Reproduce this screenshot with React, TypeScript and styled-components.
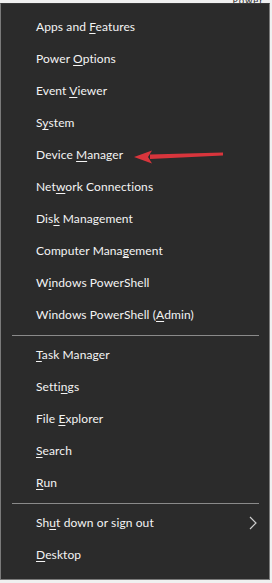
import React from "react";
import styled, { createGlobalStyle } from "styled-components";

const Global = createGlobalStyle`
  html, body { margin: 0; padding: 0; background: #ffffff; }
  body { width: 272px; height: 583px; overflow: hidden; font-family: "Lato", "Noto Sans", sans-serif; }
`;

const Page = styled.div`
  position: relative;
  width: 272px;
  height: 583px;
  background: #f0f0f0;
  padding: 3px 2px 3px 0;
  box-sizing: border-box;
`;

const Menu = styled.div`
  position: relative;
  width: 270px;
  height: 577px;
  box-sizing: border-box;
  background: #2b2b2b;
  border: 1px solid #7a7a7a;
  border-top-color: #3a3a3a;
  padding: 7px 0 0 0;
  display: flex;
  flex-direction: column;
`;

const Item = styled.div`
  height: 32px;
  display: flex;
  align-items: center;
  justify-content: space-between;
  padding: 0 12px 0 35px;
  color: #f4f4f4;
  font-family: "Lato", "Noto Sans", sans-serif;
  font-size: 12px;
  letter-spacing: 0.1px;
  line-height: 1;
`;

const Key = styled.span`
  text-decoration: underline;
  text-underline-offset: 2px;
  text-decoration-thickness: 1px;
`;

const Separator = styled.div`
  height: 8px;
  display: flex;
  align-items: center;
  padding: 0 10px 0 11px;
  &::after {
    content: "";
    flex: 1;
    height: 1px;
    background: #8a8a8a;
  }
`;

const Arrow = styled.svg`
  position: absolute;
  left: 130px;
  top: 146px;
`;

const Chevron = styled.svg`
  display: block;
`;

const TopText = styled.div`
  position: absolute;
  top: -4px;
  right: 8px;
  font-size: 9px;
  line-height: 9px;
  color: #222;
  font-family: "Noto Sans", sans-serif;
  letter-spacing: 1px;
`;

type Entry = { pre: string; key: string; post: string; sub?: boolean } | "sep";

const entries: Entry[] = [
  { pre: "Apps and ", key: "F", post: "eatures" },
  { pre: "Power ", key: "O", post: "ptions" },
  { pre: "Event ", key: "V", post: "iewer" },
  { pre: "S", key: "y", post: "stem" },
  { pre: "Device ", key: "M", post: "anager" },
  { pre: "Net", key: "w", post: "ork Connections" },
  { pre: "Dis", key: "k", post: " Management" },
  { pre: "Computer Mana", key: "g", post: "ement" },
  { pre: "W", key: "i", post: "ndows PowerShell" },
  { pre: "Windows PowerShell (", key: "A", post: "dmin)" },
  "sep",
  { pre: "", key: "T", post: "ask Manager" },
  { pre: "Setti", key: "n", post: "gs" },
  { pre: "File ", key: "E", post: "xplorer" },
  { pre: "", key: "S", post: "earch" },
  { pre: "", key: "R", post: "un" },
  "sep",
  { pre: "Sh", key: "u", post: "t down or sign out", sub: true },
  { pre: "", key: "D", post: "esktop" },
];

export default function App() {
  return (
    <>
      <Global />
      <Page>
        <TopText>Power</TopText>
        <Menu>
          {entries.map((e, i) =>
            e === "sep" ? (
              <Separator key={i} />
            ) : (
              <Item key={i}>
                <span>
                  {e.pre}
                  <Key>{e.key}</Key>
                  {e.post}
                </span>
                {e.sub && (
                  <Chevron width="8" height="14" viewBox="0 0 8 14">
                    <polyline points="1,1 7,7 1,13" fill="none" stroke="#cfcfcf" strokeWidth="1.2" />
                  </Chevron>
                )}
              </Item>
            )
          )}
        </Menu>
        <Arrow width="100" height="22" viewBox="0 0 100 22">
          <path d="M20 8.5 L93 6.5 L93 9.5 L20 13 Z" fill="#d8353c" />
          <path d="M4 11 L22 4.5 L18 11 L22 17.5 Z" fill="#d8353c" />
        </Arrow>
      </Page>
    </>
  );
}
